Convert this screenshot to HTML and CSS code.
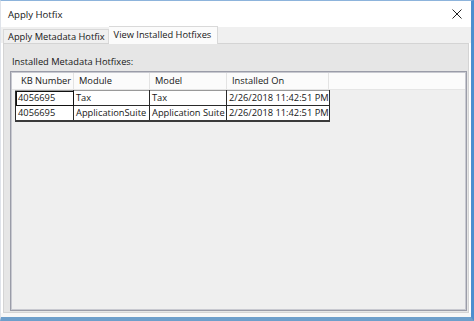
FILE: index.html
```html
<!DOCTYPE html>
<html>
<head>
<meta charset="utf-8">
<link rel="stylesheet" href="styles.css">
</head>
<body>
<div class="window">
  <div class="titlebar">
    <span class="title">Apply Hotfix</span>
    <svg class="close" width="10" height="10" viewBox="0 0 10 10"><path d="M0.5 0.5 L9.5 9.5 M9.5 0.5 L0.5 9.5" stroke="#222" stroke-width="1" fill="none"/></svg>
  </div>
  <div class="tabstrip">
    <div class="tab">Apply Metadata Hotfix</div>
    <div class="tab active">View Installed Hotfixes</div>
  </div>
  <div class="panel">
    <div class="label">Installed Metadata Hotfixes:</div>
    <div class="listview">
      <div class="header">
        <div class="hcell c1">KB Number</div>
        <div class="hcell c2">Module</div>
        <div class="hcell c3">Model</div>
        <div class="hcell c4">Installed On</div>
      </div>
      <table class="rows">
        <colgroup>
          <col class="w1"><col class="w2"><col class="w3"><col class="w4">
        </colgroup>
        <tr>
          <td class="focus">4056695</td>
          <td>Tax</td>
          <td>Tax</td>
          <td>2/26/2018 11:42:51 PM</td>
        </tr>
        <tr>
          <td>4056695</td>
          <td>ApplicationSuite</td>
          <td>Application Suite</td>
          <td>2/26/2018 11:42:51 PM</td>
        </tr>
      </table>
    </div>
  </div>
  <div class="bottom"></div>
</div>
</body>
</html>
```

FILE: styles.css
```css
html, body {
  margin: 0;
  padding: 0;
  background: #ffffff;
}
body {
  font-family: "Open Sans", "Noto Sans", sans-serif;
  font-size: 9.3px;
  color: #161616;
}
.window {
  width: 474px;
  height: 321px;
  box-sizing: border-box;
  border-top: 1px solid #8db4dc;
  border-right: 3px solid #4d8fcf;
  border-bottom: 4px solid #6e9fcb;
  border-left: 1px solid #dfe3ea;
  display: flex;
  flex-direction: column;
  background: #ffffff;
}
.titlebar {
  height: 26px;
  flex: none;
  display: flex;
  align-items: center;
  justify-content: space-between;
  padding: 0 9px 0 7px;
  background: #ffffff;
  font-size: 9.6px;
}
.close {
  display: block;
}
.tabstrip {
  height: 16px;
  flex: none;
  display: flex;
  align-items: flex-end;
  background: #f0f0f0;
  padding-left: 2px;
}
.tab {
  height: 14px;
  box-sizing: border-box;
  padding: 0 3px 0 4px;
  border: 1px solid #d9d9d9;
  border-bottom: none;
  background: #f0f0f0;
  line-height: 13px;
  white-space: nowrap;
}
.tab.active {
  height: 18px;
  margin-bottom: -1px;
  background: #fbfbfb;
  border-left: none;
  padding: 0 6px 0 5px;
  line-height: 16px;
  position: relative;
}
.panel {
  flex: 1;
  margin: 0 2px;
  border: 1px solid #d4d4d4;
  background: #e6e6e6;
  padding: 0 1px 1px 6px;
  display: flex;
  flex-direction: column;
}
.label {
  padding: 12px 0 0 2px;
  height: 15px;
  line-height: 12px;
  flex: none;
}
.listview {
  flex: 1;
  border: 1px solid #9a9ca8;
  box-shadow: inset 1px 1px 0 #c8c9d0, inset -1px -1px 0 #c8c9d0;
  background: #efefef;
  display: flex;
  flex-direction: column;
}
.header {
  height: 17px;
  flex: none;
  display: flex;
  background: #fbfbfb;
  border-bottom: 1px solid #e5e5e5;
  box-sizing: border-box;
  margin: 1px 1px 0 1px;
}
.hcell {
  border-right: 1px solid #e3e3e3;
  line-height: 16px;
  box-sizing: border-box;
  padding-left: 5px;
  white-space: nowrap;
}
.c1 { width: 62px; padding-left: 9px; }
.c2 { width: 76px; }
.c3 { width: 77px; }
.c4 { width: 102px; }
.rows {
  border-collapse: collapse;
  table-layout: fixed;
  width: 314px;
  margin-left: 4px;
  background: #ffffff;
}
.w1 { width: 58px; }
.w2 { width: 76px; }
.w3 { width: 77px; }
.w4 { width: 103px; }
.rows td {
  border: 1px solid #2a2a2a;
  padding: 0 0 0 2px;
  height: 14px;
  line-height: 14px;
  white-space: nowrap;
  overflow: hidden;
}
.rows tr:first-child td {
  border-top: 1px solid #9a9a9a;
}
.rows tr:last-child td {
  border-bottom: 2px solid #3a3a3a;
}
.rows td.focus {
  outline: 1px solid #111;
  outline-offset: -1px;
}
.bottom {
  height: 4px;
  flex: none;
  background: #f7f7f7;
}
```
